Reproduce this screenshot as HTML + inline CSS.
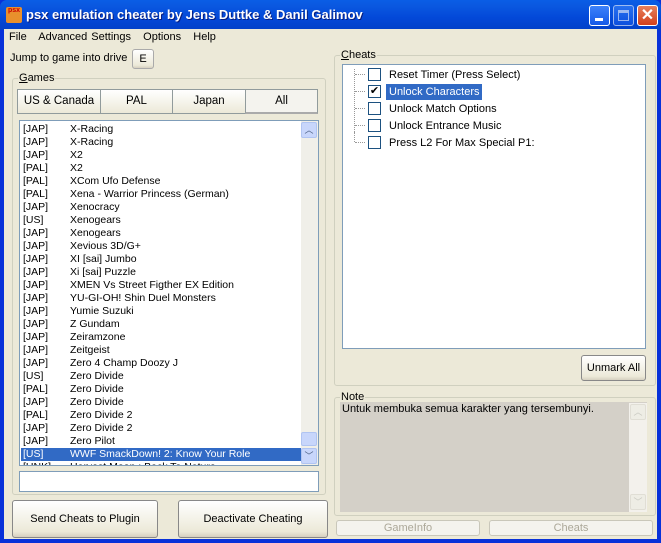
<!DOCTYPE html>
<html><head><style>
*{box-sizing:border-box;margin:0;padding:0}
body{width:661px;height:543px;overflow:hidden;font-family:"Liberation Sans",Tahoma,sans-serif;font-size:10.5px;color:#000;background:#0831d9;position:relative}
.a{position:absolute}
.win{left:4px;top:29px;width:653px;height:510px;background:#ece9d8}
.title{left:0;top:0;width:661px;height:30px;background:linear-gradient(#0a5ee6,#0a58e0 20%,#0348d8 60%,#0240c8);border-radius:7px 7px 0 0}
.tb{top:5px;width:21px;height:21px;border:1px solid #fff;border-radius:3px;background:linear-gradient(#3c82fa,#1559e8)}
.btn{background:linear-gradient(#fff,#ece9d8 85%,#d6d0c0);border:1px solid #003c74;border-radius:3px;text-align:center;font-size:11px}
.grp{border:1px solid #d0d0bf;border-radius:3px}
.lbl{background:#ece9d8;padding:0 1px;top:-7px;left:5px;position:absolute;line-height:12px;font-size:11px}
.list{background:#fff;border:1px solid #7f9db9}
.row{height:13px;line-height:13px;white-space:nowrap;position:relative}
.row span{position:absolute;left:47px}
.sb{background:#f0efe9;}
.arr{width:16px;height:16px;border-radius:2px;background:#c8d6fb;border:1px solid #b0c4f2;color:#4d6185;font-size:9px;text-align:center;line-height:14px}
.cb{width:13px;height:13px;border:1px solid #1c5180;background:#fff}
.tab{top:89px;height:25px;border:1px solid #919b9c;background:linear-gradient(#fff,#ece9d8);text-align:center;line-height:23px;font-size:11.5px}
</style></head><body>
<div class="a title"></div>
<div class="a" style="left:6px;top:7px;width:16px;height:16px;background:#e8902c;border-radius:2px;color:#c00;font-size:7px;font-weight:bold;line-height:8px;text-align:center">psx</div>
<div class="a" style="left:26px;top:7px;color:#fff;font-weight:bold;font-size:13px;text-shadow:1px 1px #0a1e7d">psx emulation cheater by Jens Duttke &amp; Danil Galimov</div>
<div class="a tb" style="left:589px"><div class="a" style="left:5px;top:12px;width:8px;height:3px;background:#fff"></div></div>
<div class="a tb" style="left:613px;opacity:.6"><div class="a" style="left:4px;top:4px;width:11px;height:11px;border:1px solid #fff;border-top-width:3px"></div></div>
<div class="a tb" style="left:637px;background:linear-gradient(#e8805c,#d2401c);color:#fff;font-size:16px;line-height:19px;text-align:center;font-weight:bold">✕</div>
<div class="a win"></div>
<div class="a" style="top:30px;left:9px;line-height:14px;font-size:11px;word-spacing:1px">File&nbsp;&nbsp; Advanced Settings&nbsp;&nbsp; Options&nbsp;&nbsp; Help</div>
<div class="a" style="left:10px;top:52px;font-size:11px">Jump to game into drive</div>
<div class="a btn" style="left:132px;top:49px;width:22px;height:20px;line-height:18px;border-color:#aaa">E</div>

<div class="a grp" style="left:12px;top:78px;width:314px;height:417px"><div class="lbl"><u>G</u>ames</div></div>
<div class="a tab" style="left:17px;width:84px">US &amp; Canada</div>
<div class="a tab" style="left:100px;width:73px">PAL</div>
<div class="a tab" style="left:172px;width:74px">Japan</div>
<div class="a tab" style="left:245px;width:73px;background:#f4f3ee;border-bottom:2px solid #aaa">All</div>

<div class="a list" style="left:19px;top:120px;width:300px;height:346px;overflow:hidden">
<div class="a" style="left:3px;top:2px;width:278px">
<div class="row">[JAP]<span>X-Racing</span></div>
<div class="row">[JAP]<span>X-Racing</span></div>
<div class="row">[JAP]<span>X2</span></div>
<div class="row">[PAL]<span>X2</span></div>
<div class="row">[PAL]<span>XCom Ufo Defense</span></div>
<div class="row">[PAL]<span>Xena - Warrior Princess (German)</span></div>
<div class="row">[JAP]<span>Xenocracy</span></div>
<div class="row">[US]<span>Xenogears</span></div>
<div class="row">[JAP]<span>Xenogears</span></div>
<div class="row">[JAP]<span>Xevious 3D/G+</span></div>
<div class="row">[JAP]<span>XI [sai] Jumbo</span></div>
<div class="row">[JAP]<span>Xi [sai] Puzzle</span></div>
<div class="row">[JAP]<span>XMEN Vs Street Figther EX Edition</span></div>
<div class="row">[JAP]<span>YU-GI-OH! Shin Duel Monsters</span></div>
<div class="row">[JAP]<span>Yumie Suzuki</span></div>
<div class="row">[JAP]<span>Z Gundam</span></div>
<div class="row">[JAP]<span>Zeiramzone</span></div>
<div class="row">[JAP]<span>Zeitgeist</span></div>
<div class="row">[JAP]<span>Zero 4 Champ Doozy J</span></div>
<div class="row">[US]<span>Zero Divide</span></div>
<div class="row">[PAL]<span>Zero Divide</span></div>
<div class="row">[JAP]<span>Zero Divide</span></div>
<div class="row">[PAL]<span>Zero Divide 2</span></div>
<div class="row">[JAP]<span>Zero Divide 2</span></div>
<div class="row">[JAP]<span>Zero Pilot</span></div>
<div class="row" style="background:#316ac5;color:#fff;margin-left:-2px;padding-left:2px">[US]<span style="left:49px">WWF SmackDown! 2: Know Your Role</span></div>
<div class="row">[UNK]<span>Harvest Moon : Back To Nature</span></div>
</div>
<div class="a sb" style="left:281px;top:0;width:17px;height:344px">
<div class="a arr" style="left:0;top:1px">︿</div>
<div class="a arr" style="left:0;top:311px;height:14px"></div>
<div class="a arr" style="left:0;top:327px">﹀</div>
</div>
</div>
<div class="a list" style="left:19px;top:471px;width:300px;height:21px"></div>
<div class="a btn" style="left:12px;top:500px;width:146px;height:38px;line-height:36px;border-color:#888">Send Cheats to Plugin</div>
<div class="a btn" style="left:178px;top:500px;width:150px;height:38px;line-height:36px;border-color:#888">Deactivate Cheating</div>

<div class="a grp" style="left:334px;top:55px;width:322px;height:331px"><div class="lbl"><u>C</u>heats</div></div>
<div class="a list" style="left:342px;top:64px;width:304px;height:285px;font-size:11px">
<div class="a" style="left:11px;top:4px;height:63px;border-left:1px dotted #999"></div>
<div class="a" style="left:12px;top:9px;width:10px;border-top:1px dotted #999"></div>
<div class="a" style="left:12px;top:26px;width:10px;border-top:1px dotted #999"></div>
<div class="a" style="left:12px;top:43px;width:10px;border-top:1px dotted #999"></div>
<div class="a" style="left:12px;top:60px;width:10px;border-top:1px dotted #999"></div>
<div class="a" style="left:12px;top:77px;width:10px;border-top:1px dotted #999"></div>
<div class="a" style="left:11px;top:67px;height:10px;border-left:1px dotted #999"></div>
<div class="a cb" style="left:25px;top:3px"></div>
<div class="a cb" style="left:25px;top:20px;font-size:11px;line-height:11px;text-align:center">✔</div>
<div class="a cb" style="left:25px;top:37px"></div>
<div class="a cb" style="left:25px;top:54px"></div>
<div class="a cb" style="left:25px;top:71px"></div>
<div class="a" style="left:46px;top:3px;line-height:14px">Reset Timer (Press Select)</div>
<div class="a" style="left:43px;top:19px;line-height:16px;background:#316ac5;color:#fff;padding:0 3px">Unlock Characters</div>
<div class="a" style="left:46px;top:37px;line-height:14px">Unlock Match Options</div>
<div class="a" style="left:46px;top:54px;line-height:14px">Unlock Entrance Music</div>
<div class="a" style="left:46px;top:71px;line-height:14px">Press L2 For Max Special P1:</div>
</div>
<div class="a btn" style="left:581px;top:355px;width:65px;height:26px;line-height:24px;border-color:#888">Unmark All</div>

<div class="a grp" style="left:334px;top:397px;width:322px;height:119px"><div class="lbl">Note</div></div>
<div class="a" style="left:340px;top:402px;width:307px;height:110px;background:#d4d0c8;border:1px solid #d4d0c8">
<div class="a" style="left:1px;top:0;font-size:11px">Untuk membuka semua karakter yang tersembunyi.</div>
<div class="a" style="left:288px;top:0;width:18px;height:109px;background:#f3f1ec">
<div class="a arr" style="left:1px;top:1px;background:#eeede5;border-color:#e0ded5;color:#c8c8c0">︿</div>
<div class="a arr" style="left:1px;top:91px;background:#eeede5;border-color:#e0ded5;color:#c8c8c0">﹀</div>
</div></div>
<div class="a btn" style="left:336px;top:520px;width:144px;height:16px;line-height:14px;color:#aca899;border-color:#c9c7ba;background:#f4f3ee">GameInfo</div>
<div class="a btn" style="left:489px;top:520px;width:164px;height:16px;line-height:14px;color:#aca899;border-color:#c9c7ba;background:#f4f3ee">Cheats</div>
</body></html>
